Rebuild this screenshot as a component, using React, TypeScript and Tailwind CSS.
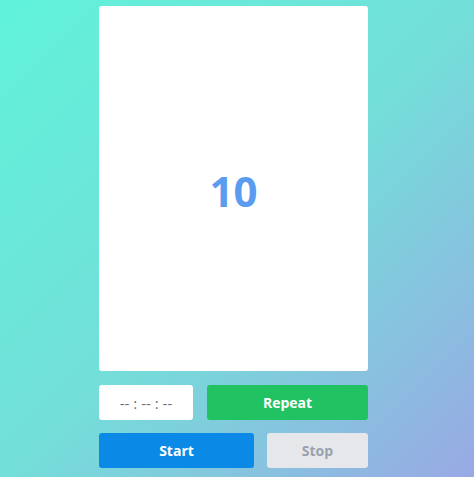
import { useState } from 'react';

export default function App() {
  const [time, setTime] = useState('');
  const [count] = useState(10);

  return (
    <div
      className="min-h-screen w-full bg-[linear-gradient(135deg,#60f3da_0%,#73dfd9_50%,#99a9e4_100%)] pt-[6px] pb-[9px]"
      style={{ fontFamily: '"Open Sans", "Noto Sans", sans-serif' }}
    >
      <div className="ml-[99px] w-[269px] flex flex-col">
        <div className="h-[365px] bg-white rounded-[3px] flex items-center justify-center pt-[4px]">
          <span className="text-[42px] font-bold text-[#5b9cf0] leading-none">{count}</span>
        </div>

        <div className="mt-[14px] flex gap-[14px]">
          <input
            value={time}
            onChange={e => setTime(e.target.value)}
            placeholder="-- : -- : --"
            className="w-[94px] h-[35px] bg-white rounded-[3px] text-center text-[15px] text-gray-700 placeholder:text-gray-500 outline-none"
          />
          <button className="flex-1 h-[35px] bg-[#21c262] rounded-[3px] text-white text-[14px] font-bold">
            Repeat
          </button>
        </div>

        <div className="mt-[13px] flex gap-[13px]">
          <button className="w-[155px] h-[35px] bg-[#0a8ae6] rounded-[3px] text-white text-[14px] font-bold">
            Start
          </button>
          <button className="flex-1 h-[35px] bg-[#e5e7eb] rounded-[3px] text-gray-400 text-[14px] font-bold">
            Stop
          </button>
        </div>
      </div>
    </div>
  );
}
